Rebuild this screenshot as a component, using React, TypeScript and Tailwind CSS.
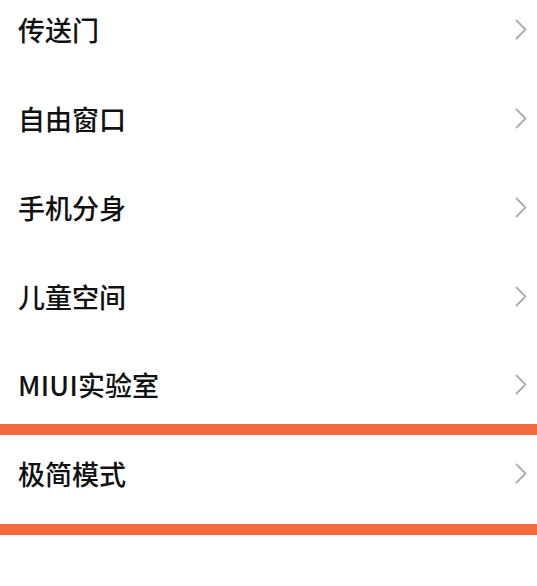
import React from 'react';

const Chevron: React.FC = () => (
  <svg width="12" height="21" viewBox="0 0 12 21" fill="none" className="mr-[10px] flex-shrink-0">
    <path d="M1.5 1.5 L10.5 10.5 L1.5 19.5" stroke="#adadad" strokeWidth="1.8" strokeLinecap="round" strokeLinejoin="round" />
  </svg>
);

const Row: React.FC<{ label: React.ReactNode; className?: string }> = ({ label, className = '' }) => (
  <div className={`flex items-center justify-between pl-[18px] ${className}`}>
    <span className="text-[27px] leading-none font-medium text-[#111]">{label}</span>
    <Chevron />
  </div>
);

const App: React.FC = () => {
  return (
    <div
      className="w-[537px] h-[586px] overflow-hidden bg-white"
      style={{ fontFamily: '"Noto Sans CJK SC", "Noto Sans", sans-serif' }}
    >
      <div className="-mt-[15px] flex flex-col">
        <Row label="传送门" className="h-[89px]" />
        <Row label="自由窗口" className="h-[89px]" />
        <Row label="手机分身" className="h-[89px]" />
        <Row label="儿童空间" className="h-[88px]" />
        <Row
          label={
            <>
              <span className="tracking-[0.3px]">MIUI</span>实验室
            </>
          }
          className="h-[84px] pt-[4px]"
        />
        <div className="h-[11px] bg-[#f56b3f]" />
        <Row label="极简模式" className="h-[89px] pb-[12px]" />
        <div className="h-[11px] bg-[#f56b3f]" />
      </div>
    </div>
  );
};

export default App;
